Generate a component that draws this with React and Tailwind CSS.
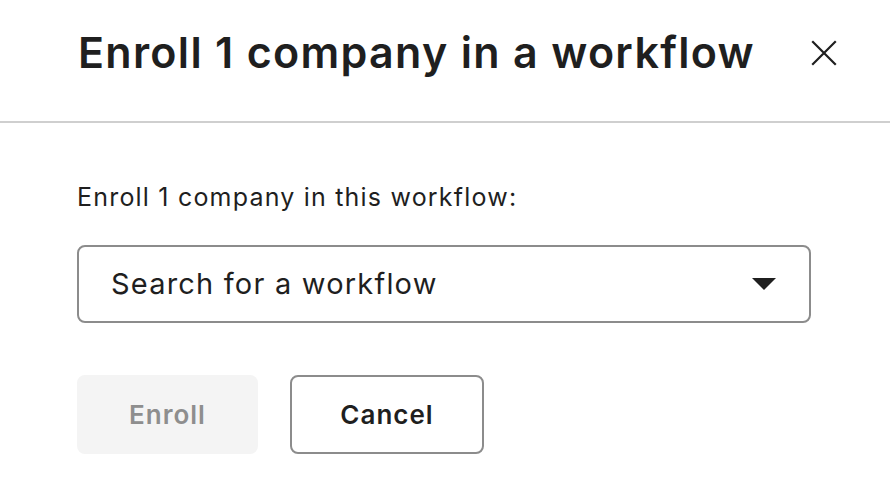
import React from 'react';

// Enroll-in-workflow modal
const App = () => {
  return (
    <div className="w-[890px] h-[500px] bg-white text-[#1f1f1f] font-['Inter',sans-serif] overflow-hidden">
      {/* Header */}
      <div className="h-[123px] pl-[78px] pr-[52px] pb-[16px] flex items-center justify-between border-b-2 border-[#cfcfcf]">
        <h1 className="text-[43px] font-semibold tracking-[1.3px] leading-none">Enroll 1 company in a workflow</h1>
        <button className="w-[28px] h-[28px] flex items-center justify-center">
          <svg width="26" height="26" viewBox="0 0 26 26" fill="none" stroke="#1f1f1f" strokeWidth="2.2" strokeLinecap="square">
            <path d="M2 2L24 24M24 2L2 24" />
          </svg>
        </button>
      </div>

      {/* Body */}
      <div className="pl-[77px] pr-[79px] pt-[62px]">
        <p className="text-[25px] tracking-[1.2px] leading-none">Enroll 1 company in this workflow:</p>
        <div className="mt-[35px] h-[78px] rounded-[8px] border-2 border-[#8c8c8c] flex items-center justify-between pl-[32px] pr-[32px]">
          <span className="text-[29px] tracking-[1.2px]">Search for a workflow</span>
          <svg width="26" height="14" viewBox="0 0 26 14">
            <path d="M1 1H25L13 13Z" fill="#1f1f1f" />
          </svg>
        </div>
        <div className="mt-[52px] flex gap-[32px]">
          <button className="w-[181px] h-[79px] rounded-[8px] bg-[#f4f4f4] text-[#8e8e8e] text-[26px] tracking-[1px] font-semibold">
            Enroll
          </button>
          <button className="w-[194px] h-[79px] rounded-[8px] border-2 border-[#8c8c8c] text-[26px] tracking-[1px] font-semibold text-[#1f1f1f]">
            Cancel
          </button>
        </div>
      </div>
    </div>
  );
};

export default App;
